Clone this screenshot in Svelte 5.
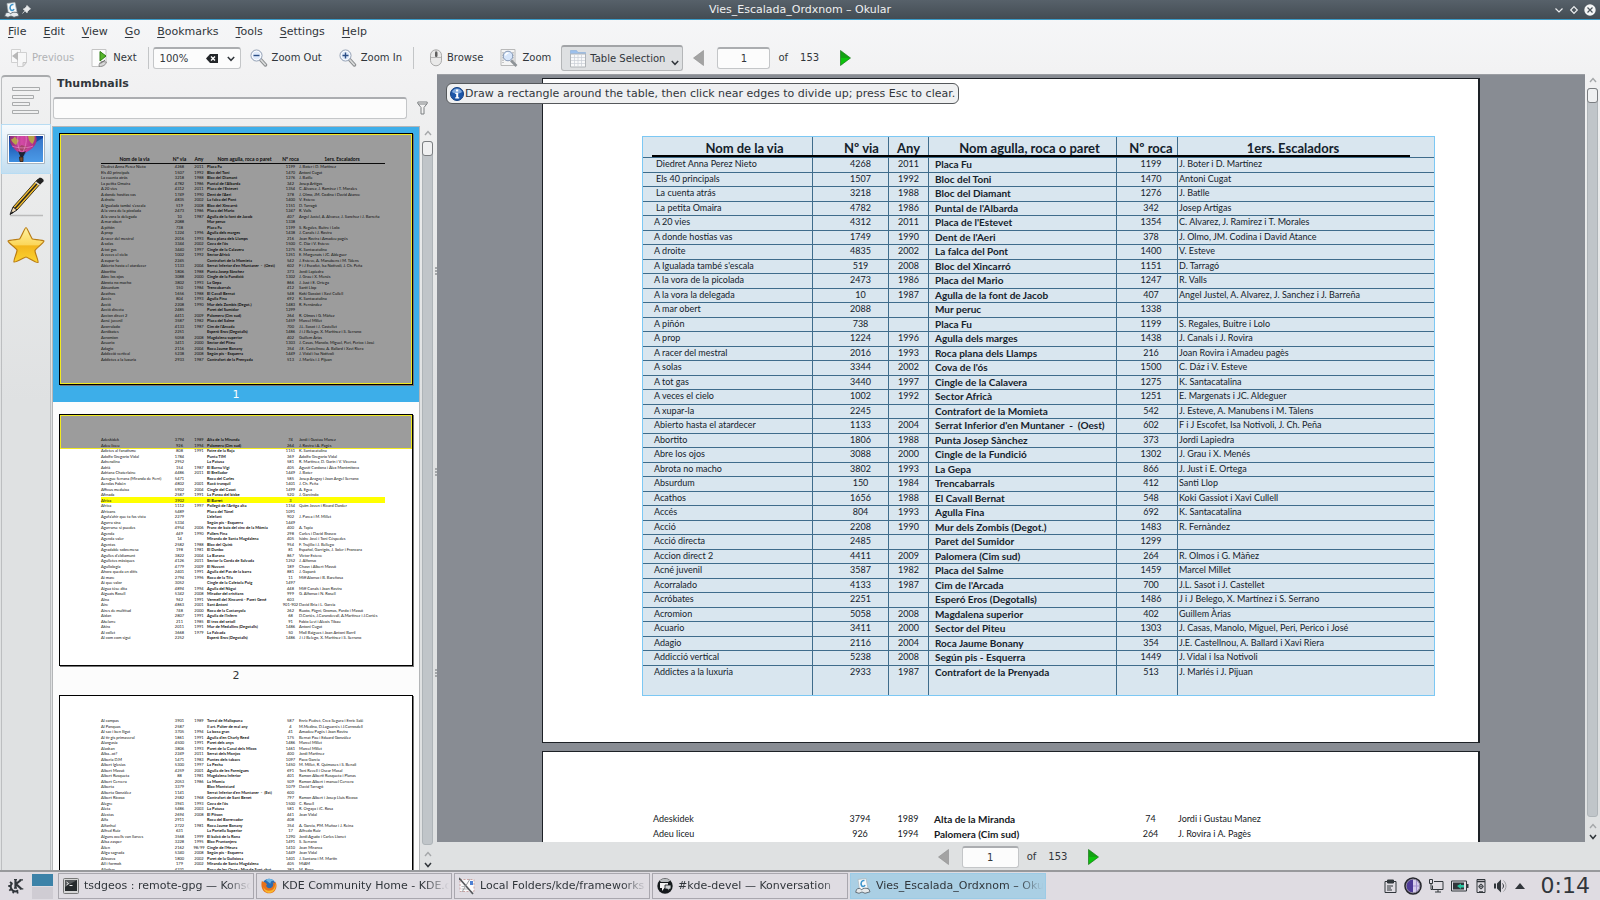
<script>
  const menus = ['File', 'Edit', 'View', 'Go', 'Bookmarks', 'Tools', 'Settings', 'Help'];

  const headers = ['Nom de la via', 'Nº via', 'Any', 'Nom agulla, roca o paret', 'Nº roca', '1ers. Escaladors'];

  // name | number | year | rock | rock number | climbers
  const parse = (text) =>
    text
      .trim()
      .split('\n')
      .map((line) => line.split('|').map((cell) => cell.trim()));

  const pageOne = parse(`
Diedret Anna Perez Nieto|4268|2011|Placa Fu|1199|J. Boter i D. Martínez
Els 40 principals|1507|1992|Bloc del Toni|1470|Antoni Cugat
La cuenta atrás|3218|1988|Bloc del Diamant|1276|J. Batlle
La petita Omaira|4782|1986|Puntal de l'Albarda|342|Josep Artigas
A 20 vies|4312|2011|Placa de l'Estevet|1354|C. Alvarez, J. Ramirez i T. Morales
A donde hostias vas|1749|1990|Dent de l'Aeri|378|J. Olmo, JM. Codina i David Atance
A droite|4835|2002|La falca del Pont|1400|V. Esteve
A Igualada també s'escala|519|2008|Bloc del Xincarró|1151|D. Tarragó
A la vora de la picolada|2473|1986|Placa del Mario|1247|R. Valls
A la vora la delegada|10|1987|Agulla de la font de Jacob|407|Angel Justel, A. Alvarez, J. Sanchez i J. Barreña
A mar obert|2088||Mur peruc|1338|
A piñón|738||Placa Fu|1199|S. Regales, Buitre i Lolo
A prop|1224|1996|Agulla dels marges|1438|J. Canals i J. Rovira
A racer del mestral|2016|1993|Roca plana dels Llamps|216|Joan Rovira i Amadeu pagès
A solas|3344|2002|Cova de l'ós|1500|C. Dáz i V. Esteve
A tot gas|3440|1997|Cingle de la Calavera|1275|K. Santacatalina
A veces el cielo|1002|1992|Sector Africà|1251|E. Margenats i JC. Aldeguer
A xupar-la|2245||Contrafort de la Momieta|542|J. Esteve, A. Manubens i M. Tàlens
Abierto hasta el atardecer|1133|2004|Serrat Inferior d'en Muntaner \u00a0- \u00a0(Oest)|602|F i J Escofet, Isa Notivoli, J. Ch. Peña
Abortito|1806|1988|Punta Josep Sànchez|373|Jordi Lapiedra
Abre los ojos|3088|2000|Cingle de la Fundició|1302|J. Grau i X. Menés
Abrota no macho|3802|1993|La Gepa|866|J. Just i E. Ortega
Absurdum|150|1984|Trencabarrals|412|Santi Llop
Acathos|1656|1988|El Cavall Bernat|548|Koki Gassiot i Xavi Cullell
Accés|804|1993|Agulla Fina|692|K. Santacatalina
Acció|2208|1990|Mur dels Zombis (Degot.)|1483|R. Fernàndez
Acció directa|2485||Paret del Sumidor|1299|
Accion direct 2|4411|2009|Palomera (Cim sud)|264|R. Olmos i G. Màñez
Acné juvenil|3587|1982|Placa del Salme|1459|Marcel Millet
Acorralado|4133|1987|Cim de l'Arcada|700|J.L. Sasot i J. Castellet
Acróbates|2251||Esperó Eros (Degotalls)|1486|J i J Belego, X. Martínez i S. Serrano
Acromion|5058|2008|Magdalena superior|402|Guillem Àrias
Acuario|3411|2000|Sector del Piteu|1303|J. Casas, Manolo, Miguel, Peri, Perico i José
Adagio|2116|2004|Roca Jaume Bonany|354|J.E. Castellnou, A. Ballard i Xavi Riera
Addicció vertical|5238|2008|Según pis - Esquerra|1449|J. Vidal i Isa Notivoli
Addictes a la luxuria|2933|1987|Contrafort de la Prenyada|513|J. Marlés i J. Pijuan`);

  const pageTwo = parse(`
Adeskidek|3794|1989|Alta de la Miranda|74|Jordi i Gustau Manez
Adeu liceu|926|1994|Palomera (Cim sud)|264|J. Rovira i A. Pagès
Adictes al fanatisme|808|1991|Fotre de la Roja|1151|K. Santacatalina
Adolfo Gregorio Vidal|1784||Punta TIM|369|Adolfo Gregorio Vidal
Adrenalina|2952||La Patusa|581|R. Martínez, D. Garin i V. Vicensa
Adrià|154|1987|El Barnu Vigi|405|Agustí Cardona i Àlex Montmitova
Adriana Chaterlaine|4486|2011|El Brellador|1449|J. Boter
Aeregue ferrana (Miranda de Ferri)|5471||Roca del Carles|585|Josep Aragay i Joan Angel Serrano
Aerolas Fabén|4802|2001|Racó tranquil|1401|J. Ch. Peña
Afficus meduixa|5902|2004|Cingle del Casot|1499|A. Egea
Afinada|2587|1991|La Panxa del bisbe|520|J. Garcindo
Africa|3902||El Barret|3|
Africa|1112|1997|Pollegó de l'Artiga alta|1154|Quim Joven i Ricard Darder
Africans|5489||Placa del Túnel|1091|
Agafa'ahir que ta fas vista|2279||L'elefant|902|J. Parea i M. Millet
Agarra sina|5334||Según pis - Esquerra|1449|
Agarrarse si puedes|4954|2006|Franc de baix del cinc de la Mòmia|400|A. Tapia
Agenda|449|1990|Pallers Fina|298|Carles i David Brasco
Agenda valer|14||Miranda de Santa Magdalena|405|Isidre Jové i Toni Céspedes
Agentas|2582|1988|Bloc del Quirò|954|F. Trujillo i J. Bellego
Agradable sobremesa|198|1981|El Dunbo|81|Español, Garrigós, J. Soler i Froncara
Agulles d'eldiamunt|3822|2004|La Barana|867|Víctor Esteve
Agulletes màsiques|4126|2011|Sector la Corda de Salvada|1252|J. Alfonso
Agullología|4779|2009|El Nuvant|189|Chasn i Albert Massó
Ahora queda en ditis|2401|1991|Agulla del Pas de la barra|881|J. Gaparó
Ai mare|2794|1996|Roca de la Tifa|11|Miff Alonso i B. Bareñosa
Ai que valor|3052||Cingle de la Cafetola Puig|1497|
Aigua tèse dita|4894|1994|Agulla del Nàgui|448|Miff Canals i Joan Rovira
Aiguats Rosell|5342|2008|Mirador del cristians|999|G. Alfonso i N. Rosell
Aïna|942|1991|Vermell del Xincarró - Paret Gené|603|
Aire|4863|2001|Sant Antoni|901-902|David Bria i L. Garcia
Aires de multitud|748|2000|Roca de la Castanyola|262|Ruoto, Pàgni, Gromas, Pardo i Massó
Aidan|2807|1991|Agulla de l'Infern|68|D.Cortès, J.Carandevall, A.Martinez i J.Cortès
Akelarre|211|1985|El tros del setoll|91|Fabio Levi i Alexis Tibau
Akira|2011|1991|Mur de Medallins (Degotalls)|1486|Antoni Cugat
Al collet|3668|1979|La Falcada|50|Moll Baigues i Joan Antoni Barril
Al com com sigui|2252||Esperó Eros (Degotalls)|1486|J i J Belego, X. Martínez i S. Serrano`);

  const pageThree = parse(`
Al campas|3901|1989|Torral de Mallopuna|587|Enric Pedret, Crex Segura i Enric Salé
Al Panquas|2587||Il art. Palter de mal any|4|M.Medina, D.Laguarrés i J.Carrosdell
Al sac i ben lligat|3705|1994|La bosa gran|41|Amadeu Pagès i Joan Rovira
Al tir gis primaveral|1861|1991|Agulla d'en Charly Reed|175|Bernat Pau i Eduard González
Alangasia|4500|1991|Paret dels anys|1486|Marcel Millet
Alaskan|3806|1993|Paret de la Canal dels Micos|1461|Marcel Millet
Alba…ot?|2249|2011|Serrat dels Monjos|400|Jordi Martinez
Alberia D.M|1471|1983|Puntes dels tabacs|1097|Paco Garcia
Albert Iglesias|5300|1997|La Pecha|1450|M. Millet, R. Quimases i S. Benali
Albert Massó|4259|2001|Agulla de les Formigues|691|Toni Revell i Oscar Masal
Albert Rusqueta|88|1981|Magdalena Inferior|401|Ramon Alberti Rusqueta i Planas
Albert Cervera|2053|1986|La Momia|509|Ramon Albert i manuel Cervera
Alberta|3379||Bloc Montstard|1079|David Tarragó
Alberta Gonzàlez|1141||Serrat Inferior d'en Muntaner \u00a0- \u00a0(Est)|600|
Albert Ricoso|2582|1968|Contrafort de Sant Benet|797|Ramon Albert i Josep Lluis Ricoso
Alegre|3941|1993|Cova de l'ós|1500|C. Rosell
Aleta|5486|2003|La Patusa|581|R. Orgaya i iC. Rosa
Alestas|2694|2008|El Pitson|441|Joan Vidal
Alfa|2911||Roca del Borrevador|408|
Alfanhuí|2722|1981|Roca Jaume Bonany|354|A. Garcia, PM. Muñoz i J. Reina
Alfred Ruiz|631||La Portella Superior|17|Alfredo Ruiz
Alguns ocells van llarves|3568|1999|El balcó de la Rona|1290|Jordi Agudo i Carles Llonet
Alisa zasper|3228|1995|Bloc Prantonjera|1491|S. Serrano
Àlien|2162|98/99|Cingle de l'Heura|1410|Joan Miranca
Aliga sagrada|5340|2008|Según pis - Esquerra|1449|Joan Vidal
Alissova|1800|2002|Paret de la Guilxiosa|1401|J. Santana i M. Martín
All i formok|179|2002|Miranda de Santa Magdalena|405|MiAM
Allathas|4221||Roca de les Onze - Mur de Sant abat|382|M. Ropa
Allicorn|2214|1998|Placa del Mario|1247|R. Valls`);

  const tasks = [
    { icon: 'konsole', title: 'tsdgeos : remote-gpg — Konsole' },
    { icon: 'firefox', title: 'KDE Community Home - KDE.org' },
    { icon: 'kmail', title: 'Local Folders/kde/frameworks' },
    { icon: 'konversation', title: '#kde-devel — Konversation' },
    { icon: 'okular', title: 'Vies_Escalada_Ordxnom – Okular', active: true },
  ];

  let page = $state(1);
  let zoom = $state('100%');
  let filter = $state('');
  const pages = 153;

  const prev = () => (page = Math.max(1, +page - 1));
  const next = () => (page = Math.min(pages, +page + 1));
</script>

{#snippet cols()}
  <colgroup>
    <col class="c-name" /><col class="c-num" /><col class="c-year" /><col class="c-rock" /><col class="c-roca" /><col />
  </colgroup>
{/snippet}

{#snippet routes(rows)}
  <tbody>
    {#each rows as row}
      <tr class:hit={row[1] === '3902'}>
        {#each row as cell}<td>{cell}</td>{/each}
      </tr>
    {/each}
  </tbody>
{/snippet}

{#snippet head()}
  <thead>
    <tr>{#each headers as h}<th>{h}</th>{/each}</tr>
  </thead>
{/snippet}

{#snippet magnifier(sign)}
  <svg width="18" height="18" viewBox="0 0 18 18">
    <path d="M10.5 10.5 15.5 16" stroke="#8c8f91" stroke-width="3.4" stroke-linecap="round" />
    <path d="M10.8 10.8 15.3 15.7" stroke="#dcdddd" stroke-width="1.6" stroke-linecap="round" />
    <circle cx="6.5" cy="6.5" r="5.5" fill="#dfeafb" stroke="#8b98ad" />
    <circle cx="6.5" cy="6.5" r="4.4" fill="none" stroke="#fff" />
    <path d={sign === '+' ? 'M3.5 6.5h6M6.5 3.5v6' : 'M3.5 6.5h6'} stroke="#2b4e86" stroke-width="1.4" />
  </svg>
{/snippet}

{#snippet pager()}
  <button class="arrow" aria-label="Previous page" onclick={prev}>
    <svg width="11" height="16" viewBox="0 0 11 16"><path d="M10.5.5v15L.5 8z" fill="#a3a3a3" stroke="#8d8d8d" stroke-width=".6" /></svg>
  </button>
  <input class="field page-no" aria-label="Page number" bind:value={page} />
  <span class="of">of</span>
  <span class="total">{pages}</span>
  <button class="arrow" aria-label="Next page" onclick={next}>
    <svg width="11" height="16" viewBox="0 0 11 16">
      <path d="M.5.5v15L10.5 8z" fill="#12a312" stroke="#1b7a1b" stroke-width=".7" />
      <path d="M1 8h9L1 14.5z" fill="#0cc40c" />
    </svg>
  </button>
{/snippet}

{#snippet scrollbar()}
  <div class="scrollbar">
    <svg width="8" height="6" viewBox="0 0 8 6"><path d="M1 5 4 1.500 7 5" fill="none" stroke="#a4a7a9" stroke-width="1.400" /></svg>
    <div class="track"><div class="handle"></div></div>
    <svg width="8" height="6" viewBox="0 0 8 6"><path d="M1 5 4 1.500 7 5" fill="none" stroke="#a4a7a9" stroke-width="1.400" /></svg>
    <svg width="8" height="6" viewBox="0 0 8 6"><path d="M1 1 4 4.500 7 1" fill="none" stroke="#31363b" stroke-width="1.500" /></svg>
  </div>
{/snippet}

{#snippet okularIcon()}
  <svg width="16" height="16" viewBox="0 0 16 16">
    <path d="M3 1.500 11 .5l2 10-8.500 1.500z" fill="#f8fafb" stroke="#aab4ba" stroke-width=".7" />
    <path d="M9.500 2.500C6.500 2 5.500 5 6.500 7.500c1 1.600 3 1 3.500-.5" fill="none" stroke="#3d95cc" stroke-width="1.500" />
    <path d="M1.500 11.500c1.500-1.500 4-1.500 5 .3 1.500-1.800 5-2.300 7.500-.6l1 2.600-5 1.500-3-1.300-3 1.300-3.300-1z" fill="#e6e9eb" stroke="#5c676e" stroke-width=".9" />
  </svg>
{/snippet}

<div class="desktop">
  <header class="titlebar">
    <span class="title-left">
      {@render okularIcon()}
      <svg width="9" height="9" viewBox="0 0 9 9"><path d="M5 .5 8.500 4 7.300 4.500 5.500 6.500 5 7.800 1.300 4 2.700 3.500 4.500 1.800zM3 5.700.5 8.500" fill="#e8eaeb" stroke="#e8eaeb" stroke-width=".8" /></svg>
    </span>
    <h1>Vies_Escalada_Ordxnom – Okular</h1>
    <span class="title-right">
      <button aria-label="Minimize"><svg width="10" height="10" viewBox="0 0 10 10"><path d="M1.500 3.500 5 7l3.500-3.500" fill="none" stroke="#eceeef" stroke-width="1.200" /></svg></button>
      <button aria-label="Maximize"><svg width="10" height="10" viewBox="0 0 10 10"><path d="M5 1.700 8.300 5 5 8.300 1.700 5z" fill="none" stroke="#eceeef" stroke-width="1.200" /></svg></button>
      <button aria-label="Close"><svg width="12" height="12" viewBox="0 0 12 12"><circle cx="6" cy="6" r="5.700" fill="#f4f5f5" /><path d="m3.500 3.500 5 5m0-5-5 5" stroke="#4b545b" stroke-width="1.200" /></svg></button>
    </span>
  </header>

  <nav class="menubar">
    {#each menus as m}
      <button><u>{m[0]}</u>{m.slice(1)}</button>
    {/each}
  </nav>

  <div class="toolbar">
    <button class="tool previous" disabled>
      <svg width="18" height="18" viewBox="0 0 18 18" opacity=".55">
        <path d="M1.500.5h9v13h-9z" fill="#fff" stroke="#b5b5b5" />
        <path d="M7.500 3.500h9v10l-3.500 4H7.500z" fill="#fbfbfb" stroke="#b5b5b5" />
        <path d="m16.500 13.500-3.500 4v-4z" fill="#ddd" stroke="#a5a5a5" />
        <path d="M8 2.500v9L2 7z" fill="#888" />
      </svg>
      Previous
    </button>
    <button class="tool" onclick={next}>
      <svg width="18" height="18" viewBox="0 0 18 18">
        <path d="M1 .5h14v12l-4 5H1z" fill="#fdfdfd" stroke="#c4c4c4" />
        <path d="M8 17.500c0-3 1-4.500 3-5l4.500.5c-1 3-3 4.500-7.500 4.500z" fill="#d8d8d8" stroke="#8e8e8e" />
        <path d="M9.500 14.500 14 11" stroke="#666" />
        <path d="M9 2.500v9.500L15 7z" fill="#56b62b" stroke="#2e7d14" />
      </svg>
      Next
    </button>
    <i class="sep"></i>
    <span class="field combo">
      <input aria-label="Zoom level" bind:value={zoom} />
      <button aria-label="Clear" onclick={() => (zoom = '')}>
        <svg width="12" height="9" viewBox="0 0 12 9"><path d="M4 0h8v9H4L0 4.500z" fill="#232629" /><path d="m5 2.500 4 4m0-4-4 4" stroke="#fff" stroke-width="1.400" /></svg>
      </button>
      <button aria-label="Zoom levels">
        <svg width="8" height="6" viewBox="0 0 8 6"><path d="M.8 1 4 4.300 7.200 1" fill="none" stroke="#31363b" stroke-width="1.500" /></svg>
      </button>
    </span>
    <button class="tool out">{@render magnifier('-')} Zoom Out</button>
    <button class="tool">{@render magnifier('+')} Zoom In</button>
    <i class="sep"></i>
    <button class="tool">
      <svg width="14" height="18" viewBox="0 0 14 18">
        <rect x="1.500" y=".8" width="11" height="16" rx="5.500" fill="#e9e9e9" stroke="#a9a9a9" />
        <path d="M7 1v7M2 8.500h10" stroke="#b5b5b5" />
        <rect x="6" y="2.500" width="2.500" height="5.500" rx="1.200" fill="#5d5d5d" />
      </svg>
      Browse
    </button>
    <button class="tool">
      <svg width="18" height="18" viewBox="0 0 18 18">
        <path d="M1 .5h14v16H1z" fill="#f5f5f5" stroke="#b9b9b9" />
        <path d="M3 3v11M13 3v11" stroke="#999" stroke-dasharray="1.500 1" />
        <path d="m11 11.500 5.500 5.500" stroke="#8e9397" stroke-width="2.600" />
        <circle cx="8" cy="7" r="4.800" fill="#d7e6fb" stroke="#8497b5" />
        <path d="M5.500 6.500a3 3 0 0 1 3-2.500" fill="none" stroke="#fff" stroke-width="1.500" />
      </svg>
      Zoom
    </button>
    <button class="tool checked">
      <svg width="16" height="18" viewBox="0 0 16 18">
        <path d="M.5.500h6l1.500 2h7.500V7H.5z" fill="#9cc0ec" stroke="#8baed8" stroke-width=".6" />
        <path d="M.5 4h15v13H.5z" fill="#f8f9fa" stroke="#b0b4b8" />
        <path d="M1 7.500h14M1 10.500h14M1 13.500h14M4.500 5v11.500M8 5v11.500M11.500 5v11.500" stroke="#c8ced5" stroke-width=".7" />
      </svg>
      Table Selection
      <svg class="drop" width="8" height="6" viewBox="0 0 8 6"><path d="M.8 1 4 4.300 7.200 1" fill="none" stroke="#31363b" stroke-width="1.500" /></svg>
    </button>
    {@render pager()}
  </div>

  <main>
    <nav class="tabs">
      <button aria-label="Contents">
        <svg width="30" height="28" viewBox="0 0 30 28" fill="#f6f6f6" stroke="#a9abac"><path d="M1.500.5h27v3h-27zM1.500 8.500h21v3h-21zM1.500 15.500h17v3h-17zM1.500 23.500h26v3h-26z" /></svg>
      </button>
      <button class="current" aria-label="Thumbnails">
        <svg width="38" height="30" viewBox="0 0 38 30">
          <defs>
            <linearGradient id="sky" x2="0" y2="1"><stop stop-color="#0e3f9e" /><stop offset="1" stop-color="#3d8ee0" /></linearGradient>
            <linearGradient id="silk" x2="1"><stop stop-color="#8a2a78" /><stop offset=".45" stop-color="#d44aa6" /><stop offset="1" stop-color="#a32c7d" /></linearGradient>
          </defs>
          <path d="M.5.5h37v29H.5z" fill="#fff" stroke="#a8b4bf" />
          <path d="M2 2h34v26H2z" fill="url(#sky)" />
          <path d="M20 17C25 12 28 8 36 4v24H14z" fill="#5aa5ee" opacity=".5" />
          <path d="M3 2h26c1.500 4 .5 8-3 11.500-3 3-6 4.500-9 6h-3.500c-3-1.500-5.500-3.500-7.500-6C3 10 2 6 3 2z" fill="url(#silk)" />
          <path d="M4 5.500c2-.5 3-2 4-3 1 2 2.500 3.500 4 4L9 11C7 10 5 8 4 5.500zM21 2h6.500c.5 3-.2 5.500-2 8-2.500-1.500-4-4-4.500-8z" fill="#b6a24b" />
          <path d="M10 14.500c2-1 3.500-2.500 4.500-3.500 2 .5 4 1.500 7 2-2 2-3.500 3-5.500 4-2.500 0-4.500-1-6-2.500z" fill="#a4456a" />
          <path d="M11 2c-1 6 0 12 3 17M19 2c1 6-1 12-3.500 17M5 12c6 2.500 15 2.500 21 0" fill="none" stroke="#f08fd0" stroke-width=".6" />
          <path d="m11 17 2.500 6h2.500l3-6c-2 1.500-6 1.500-8 0z" fill="#1f2434" />
          <path d="M12.500 23h3.500v4.500h-3z" fill="#7a4a23" stroke="#2f1c14" stroke-width=".8" />
        </svg>
      </button>
      <button aria-label="Reviews">
        <svg width="38" height="42" viewBox="0 0 38 42">
          <path d="M3 39.500h33" stroke="#bbb" stroke-width="1.500" />
          <path d="M30.500 3.500 34.500 6.500 10 34 6 31z" fill="#f2bd2c" stroke="#393120" />
          <path d="M32.500 5 8 32.500" stroke="#222" stroke-width="1.500" />
          <path d="M6 31 10 34 3 38.500z" fill="#ecd6b1" stroke="#222" /><path d="m3 38.500 2-3 1.500 1.200z" fill="#111" />
          <path d="M29 5.500 33 8.500 36.500 5.500c1-2-2.500-4.500-4.500-3.500z" fill="#222" /><path d="m28.500 6 4 3" stroke="#ddd" stroke-width="1.500" />
        </svg>
      </button>
      <button aria-label="Bookmarks">
        <svg width="38" height="38" viewBox="0 0 38 38">
          <defs><linearGradient id="gold" x2="0" y2="1"><stop stop-color="#fff3a1" /><stop offset=".5" stop-color="#fbd65a" /><stop offset=".52" stop-color="#f3b61c" /><stop offset="1" stop-color="#fcd432" /></linearGradient></defs>
          <path d="M19 1.500c1 0 5.500 11 6.500 11.500s11 1 11.500 2-8.500 8-9 9.500 4 11 3 12S20 31 19 31 8 37 7 36s3.500-10.500 3-12S.500 16 1 15s10.500-1.500 11.500-2S18 1.500 19 1.500z" fill="url(#gold)" stroke="#b97c14" stroke-width="1.200" stroke-linejoin="round" />
        </svg>
      </button>
    </nav>

    <aside>
      <h2>Thumbnails</h2>
      <div class="search">
        <input class="field" aria-label="Search thumbnails" bind:value={filter} />
        <svg width="11" height="14" viewBox="0 0 11 14"><path d="M.8 1h9.400v1.500L7 6.500v6.500H4V6.500L.8 2.500z" fill="#f2f2f2" stroke="#7d8082" /><path d="M1 3h9" stroke="#7d8082" /></svg>
      </div>
      <div class="thumbs">
        <ol>
          <li class="selected">
            <div class="thumb first">
              <table>{@render cols()}{@render head()}{@render routes(pageOne)}</table>
              <div class="view full"></div>
            </div>
            <span>1</span>
          </li>
          <li>
            <div class="thumb">
              <table>{@render cols()}{@render routes(pageTwo)}</table>
              <div class="view"></div>
            </div>
            <span>2</span>
          </li>
          <li>
            <div class="thumb">
              <table>{@render cols()}{@render routes(pageThree)}</table>
            </div>
            <span>3</span>
          </li>
        </ol>
        {@render scrollbar()}
      </div>
    </aside>

    <div class="splitter"><i></i><i></i><i></i></div>

    <section class="viewer">
      <div class="canvas">
        <div class="pages">
          <article class="page">
            <div class="selection">
              <table class="sheet ruled">{@render cols()}{@render head()}{@render routes(pageOne)}</table>
              <div class="rule"></div>
            </div>
          </article>
          <article class="page second">
            <table class="sheet">{@render cols()}{@render routes(pageTwo)}</table>
          </article>
        </div>
        {@render scrollbar()}
        <div class="message">
          <svg width="14" height="14" viewBox="0 0 14 14">
            <circle cx="7" cy="7" r="6.500" fill="#1c56a8" stroke="#123f80" /><path d="M2 5a5.300 5.300 0 0 1 10 0c-3 2-7 2-10 0z" fill="#7fa9de" />
            <path d="M6 2.500h2.200v2H6zM5.300 5.700h2.900v4.600h1v1.200h-4v-1.200h1V7h-.9z" fill="#fff" />
          </svg>
          Draw a rectangle around the table, then click near edges to divide up; press Esc to clear.
        </div>
      </div>
      <div class="minibar">{@render pager()}</div>
    </section>
  </main>

  <footer>
    <button class="kicker" aria-label="Application menu">
      <svg width="16" height="16" viewBox="0 0 16 16">
        <path d="M7.500 1.500v8.500M13 2 8 6l5.500 5" fill="none" stroke="#31363b" stroke-width="2.200" />
        <path d="M6 1.500h3M6 10.200h3M11.500 1.800H15M11.800 10.800h3.500" stroke="#31363b" stroke-width="1.200" />
        <path d="M4.500 5.200A4 4 0 0 0 3.500 11a4 4 0 0 0 6.500 1.200" fill="none" stroke="#31363b" stroke-width="2" />
        <path d="M2.500 8H.3M3.200 11 1.300 12.700M5.800 13l-.8 2.300M9 13l.8 2.500M3.800 5.500 2 4" stroke="#31363b" stroke-width="1.800" />
      </svg>
    </button>
    <div class="desks"><button class="on" aria-label="Desktop 1"></button><button aria-label="Desktop 2"></button></div>
    <div class="tasks">
      {#each tasks as task}
        <button class="task" class:active={task.active}>
          {#if task.icon === 'konsole'}
            <svg width="16" height="16" viewBox="0 0 16 16"><rect x=".5" y=".5" width="15" height="15" rx="1" fill="#d5d5d5" stroke="#777" /><path d="M2 2h12v11H2z" fill="#262a2c" /><path d="M2 2h12L2 9z" fill="#56595b" /><path d="m3.500 4 2 1.500-2 1.500M6.500 7.500h3" fill="none" stroke="#eee" /></svg>
          {:else if task.icon === 'firefox'}
            <svg width="16" height="16" viewBox="0 0 17 17"><circle cx="8.500" cy="8" r="7.300" fill="#2b6cb3" /><path d="M5 2c3-2 7-1 9 1-3-.5-4 1-4 3z" fill="#6db5e4" /><path d="M1 3c.5 1 1.500 1.500 3 1.500 1 .3 1 1.500 2.500 2L5.500 8C5.500 10.500 9 12 12 9.500c1-1 1.500-3 .5-5C15 6 15.500 5 15 3.500c2 3 2 7-.3 10-3.200 4-9.700 3.500-12.400-.2C.3 10.500 0 6 1 3z" fill="#e8711c" /><path d="M15 5c.5 5-2 8.500-6.500 8.500-2.500 0-5-1.500-6-4C3 14 6.500 16 9 15.800 13.500 15.500 17 11 15 5z" fill="#f8b92e" /></svg>
          {:else if task.icon === 'kmail'}
            <svg width="16" height="18" viewBox="1 0 16 18"><path d="M2 2.500h14v12H2z" fill="#fbfbfb" stroke="#c9a3a3" stroke-dasharray="2 1.500" /><path d="M12 4h3v4h-3z" fill="#4c80d3" /><path d="M3.500 9.500h5M3.500 12h7" stroke="#b3b7ba" /><path d="M1 1 15 17" stroke="#54585b" stroke-width="1.600" /><path d="M4 15 12 2" stroke="#9c9fa1" /></svg>
          {:else if task.icon === 'konversation'}
            <svg width="16" height="16" viewBox="1 0 16 16"><circle cx="9" cy="8" r="7.700" fill="#15191c" /><path d="M3.500 2.500c3-2.500 8-2.500 11 0L12 4H5z" fill="#b9bcbe" /><path d="M4 5h8v5H8.500L6 13v-3H4z" fill="#f3f3f3" /><path d="M9 7h6v4h-1.500v2l-2-2H9z" fill="#cfd2d4" stroke="#15191c" stroke-width=".8" /></svg>
          {:else}
            {@render okularIcon()}
          {/if}
          <span>{task.title}</span>
        </button>
      {/each}
    </div>
    <div class="tray">
      <svg width="13" height="14" viewBox="0 0 13 14" fill="none" stroke="#31363b"><path d="M1 2.500h11v11H1z" /><path d="M3.500 1h6v3h-6z" fill="#31363b" /><path d="M3 7h6M3 9h4M3 11h5" /></svg>
      <svg width="18" height="18" viewBox="0 0 18 18"><circle cx="9" cy="9" r="8" fill="#4f3b98" stroke="#26272b" stroke-width="1.600" /><path d="M9 2a7 7 0 0 1 0 14z" fill="#d7cdec" /><path d="M9 9h7M12.500 3v12" stroke="#a693d1" /><circle cx="9" cy="9" r="6.800" fill="none" stroke="#938d9e" /></svg>
      <svg width="15" height="14" viewBox="0 0 15 14" fill="none" stroke="#31363b"><path d="M5 2.500h9v8H3.500v-4" /><path d="M.5.500h3v4h-3zM2 4.500v6h1.500M6 13h6M9 10.500V13" /></svg>
      <svg width="18" height="12" viewBox="0 0 18 12"><path d="M.5 1h15v10H.5z" fill="none" stroke="#31363b" /><path d="M2 2.500h11v7H2z" fill="#31363b" /><path d="M16 4h1.500v4H16z" fill="#31363b" /><path d="m6 6 4-2.500V5h3v2.500h-3V9z" fill="#2bc3a0" /></svg>
      <svg width="10" height="14" viewBox="0 0 10 14" fill="none" stroke="#31363b"><path d="M1 .5h8v13H1z" /><path d="M1 2.500h8M3 13h4" stroke-width="1.500" /><circle cx="5" cy="7.500" r="2" /><path d="M5 4.500v6M2.500 7.500h5" stroke-width=".6" /></svg>
      <svg width="15" height="14" viewBox="0 0 15 14"><path d="M1 4.500h2v5H1zM4 4.500 8 .5v13L4 9.500z" fill="#31363b" /><path d="M9.500 4.500c1.300 1.500 1.300 3.500 0 5" fill="none" stroke="#31363b" /><path d="M10.500 1.500c3.300 3 3.300 8 0 11" fill="none" stroke="#9b9ca0" /></svg>
      <svg width="10" height="6" viewBox="0 0 10 6"><path d="M0 6 5 0l5 6z" fill="#31363b" /></svg>
    </div>
    <time>0:14</time>
  </footer>
</div>

<style>
  :global(body) {
    margin: 0;
  }
  .desktop {
    height: 100vh;
    display: flex;
    flex-direction: column;
    overflow: hidden;
    font: 11px/14px 'DejaVu Sans', sans-serif;
    color: #31363b;
    background: linear-gradient(#f7f8fa, #f2f2f3 70px, #eceded 160px, #dfe1e2 400px);
  }
  svg {
    display: block;
    flex: none;
    fill: none;
  }
  button {
    margin: 0;
    padding: 0;
    border: 0;
    background: none;
    font: inherit;
    color: inherit;
  }
  input {
    min-width: 0;
    font: inherit;
    color: inherit;
    outline: none;
  }

  .titlebar {
    display: grid;
    grid-template-columns: 1fr auto 1fr;
    align-items: center;
    height: 19px;
    padding: 0 4px;
    color: #eff0f1;
    background: linear-gradient(#57616a, #434c53);
    border-bottom: 1px solid #3c9cc8;
  }
  .titlebar h1 {
    margin: 0;
    font-size: 11px;
    font-weight: 400;
  }
  .title-left {
    display: flex;
    align-items: center;
    gap: 2px;
  }
  .title-right {
    display: flex;
    justify-content: flex-end;
    align-items: center;
    gap: 5px;
  }

  .menubar {
    display: flex;
    gap: 17px;
    padding: 4px 8px 4px;
    height: 15px;
    line-height: 15px;
  }
  .menubar u {
    text-underline-offset: 2px;
  }

  .toolbar {
    display: flex;
    align-items: center;
    height: 26px;
    padding: 2px 10px 3px;
    font-size: 10px;
  }
  .tool {
    display: flex;
    align-items: center;
    gap: 4px;
    margin-right: 17px;
    white-space: nowrap;
  }
  .tool:disabled {
    color: #b0b2b4;
  }
  .tool.out {
    margin-left: 9px;
  }
  .sep {
    width: 1px;
    height: 22px;
    margin-right: 4px;
    margin-left: -6px;
    background: #c3c5c7;
  }
  .sep + .tool {
    margin-left: 11px;
  }
  .field {
    box-sizing: border-box;
    height: 22px;
    background: #fcfcfc;
    border: 1px solid #c4c6c8;
    border-top: 2px solid #abadb0;
    border-radius: 3px;
  }
  .combo {
    display: flex;
    align-items: center;
    gap: 9px;
    width: 88px;
    padding: 0 5px 0 6px;
  }
  .combo input {
    flex: 1;
    padding: 0;
    border: 0;
    background: none;
  }
  .tool.checked {
    box-sizing: border-box;
    height: 26px;
    margin: 0 10px 0 -7px;
    padding: 0 3px 0 8px;
    background: #dee0e2;
    border: 1px solid #b4b6b8;
    border-top: 2px solid #a2a4a7;
    border-radius: 3px;
  }
  .drop {
    align-self: flex-end;
    margin: 0 0 4px 2px;
  }
  .page-no {
    width: 53px;
    margin: 0 8px 0 13px;
    text-align: center;
  }
  .of {
    margin-right: 12px;
  }
  .total {
    margin-right: 21px;
  }

  main {
    flex: 1;
    min-height: 0;
    display: flex;
  }
  .tabs {
    box-sizing: border-box;
    width: 50px;
    margin: 1px 0 0 1px;
    border: 1px solid #bcbec0;
    border-top: 2px solid #a9abad;
    border-bottom: 0;
    border-radius: 4px 4px 0 0;
    display: flex;
    flex-direction: column;
  }
  .tabs button {
    display: flex;
    justify-content: center;
    align-items: center;
    height: 48px;
  }
  .tabs .current {
    background: linear-gradient(#f6fafd, #c3def0);
    box-shadow: 0 0 0 1px #b7dcf3;
  }

  aside {
    display: flex;
    flex-direction: column;
    width: 381px;
    padding-left: 2px;
  }
  aside h2 {
    margin: 3px 0 6px 4px;
    font-size: 11px;
    line-height: 14px;
  }
  .search {
    display: flex;
    align-items: center;
    gap: 10px;
    margin-bottom: 8px;
  }
  .search .field {
    flex: 1;
  }
  .search svg {
    margin-right: 6px;
  }
  .thumbs {
    flex: 1;
    min-height: 0;
    display: flex;
    gap: 2px;
  }
  ol {
    flex: 1;
    margin: 0;
    padding: 0;
    list-style: none;
    overflow: hidden;
    background: #fcfcfc;
    box-shadow: 0 0 0 1px #b4b6b8;
  }
  li {
    height: 275px;
    padding: 0 6px;
    margin-bottom: 6px;
    text-align: center;
  }
  li.selected {
    color: #fcfcfc;
    background: #3daee9;
  }
  li::before {
    content: '';
    display: block;
    height: 6px;
  }
  li > span {
    display: block;
    margin-top: 2px;
    line-height: 16px;
  }
  .thumb {
    position: relative;
    box-sizing: border-box;
    height: 252px;
    padding: 22px 27px 0 41px;
    overflow: hidden;
    background: #fff;
    border: 1px solid #000;
    box-shadow: 1px 1px 0 #777;
    color: #111;
    text-align: left;
  }
  .view {
    position: absolute;
    inset: 0 0 auto;
    box-sizing: border-box;
    height: 34px;
    background: rgba(0, 0, 0, 0.39);
    border: 1px solid #f2ea20;
  }
  .view.full {
    height: 100%;
  }

  table {
    width: 100%;
    table-layout: fixed;
    border-spacing: 0;
    font-family: Lato, Carlito, sans-serif;
    white-space: nowrap;
  }
  td,
  th {
    padding: 0;
    text-align: left;
  }
  td:nth-child(2),
  td:nth-child(3),
  td:nth-child(5) {
    text-align: center;
  }
  td:nth-child(4) {
    font-weight: 700;
  }
  .thumb table {
    font-size: 4px;
    line-height: 5px;
  }
  .thumb td {
    height: 5px;
  }
  .thumb tr:nth-child(even) td {
    height: 6px;
  }
  .thumb th {
    height: 7px;
    font-size: 5px;
    line-height: 5px;
    text-align: center;
    border-bottom: 1px solid #111;
  }
  .thumb .c-name {
    width: 67px;
  }
  .thumb .c-num {
    width: 23px;
  }
  .thumb .c-year {
    width: 16px;
  }
  .thumb .c-rock {
    width: 75px;
  }
  .thumb .c-roca {
    width: 17px;
  }
  .hit {
    background: #ff0;
  }

  .scrollbar {
    display: flex;
    flex-direction: column;
    align-items: center;
    gap: 5px;
    width: 11px;
    padding: 3px 1px 2px;
  }
  .track {
    flex: 1;
    box-sizing: border-box;
    width: 11px;
    margin-bottom: 1px;
    background: #c0c5c9;
    border: 1px solid #aeb4b8;
    border-radius: 3px;
  }
  .handle {
    box-sizing: border-box;
    height: 15px;
    margin: -1px;
    background: #eff0f1;
    border: 1px solid #7b7e81;
    border-radius: 3px;
  }

  .splitter {
    display: flex;
    flex-direction: column;
    justify-content: space-evenly;
    align-items: center;
    width: 3px;
  }
  .splitter i {
    width: 2px;
    height: 8px;
    background: repeating-linear-gradient(#a4a7a9 0 2px, transparent 2px 3px);
  }

  .viewer {
    flex: 1;
    min-width: 0;
    display: flex;
    flex-direction: column;
  }
  .canvas {
    position: relative;
    flex: 1;
    min-height: 0;
    display: flex;
    gap: 1px;
    padding-right: 1px;
  }
  .pages {
    flex: 1;
    min-width: 0;
    overflow: hidden;
    padding-top: 3px;
    background: #888c93;
    border-top: 1px solid #9b9ea3;
    box-sizing: border-box;
  }
  .page {
    box-sizing: border-box;
    max-width: 938px;
    height: 665px;
    margin: 0 auto 8px;
    padding: 57px 43px 0 99px;
    background: #fff;
    border: 1px solid #1d2126;
    border-right-width: 2px;
  }
  .page.second {
    padding-top: 61px;
  }
  .selection {
    position: relative;
  }
  .rule {
    position: absolute;
    left: 10px;
    right: 25px;
    top: 19px;
    height: 2px;
    background: #000;
  }
  .sheet {
    font-size: 9px;
    line-height: 12px;
    color: #15191d;
  }
  .sheet td {
    box-sizing: border-box;
    height: 14px;
    vertical-align: top;
  }
  .sheet tr:nth-child(odd) td {
    height: 15px;
  }
  .sheet td:first-child {
    padding-left: 11px;
  }
  .ruled tbody tr:nth-child(-n + 4) td:first-child {
    padding-left: 13px;
  }
  .sheet td:nth-child(2) {
    padding-left: 20px;
  }
  .sheet td:nth-child(4) {
    padding-left: 6px;
    font-size: 10px;
  }
  .sheet td:nth-child(5) {
    padding-left: 8px;
  }
  .sheet td:nth-child(6) {
    padding-left: 1px;
  }
  .ruled {
    background: #d9e6ef;
    border: 1px solid #7cc8f4;
    color: #14212b;
  }
  .ruled th {
    box-sizing: border-box;
    height: 21px;
    padding-top: 2px;
    font-size: 13px;
    line-height: 17px;
    text-align: center;
  }
  .ruled th:first-child {
    padding-left: 34px;
  }
  .ruled th:nth-child(2) {
    padding-left: 22px;
  }
  .ruled th:nth-child(4) {
    padding-left: 14px;
  }
  .ruled th:nth-child(5) {
    padding-left: 8px;
  }
  .ruled th:last-child {
    padding-right: 26px;
  }
  .ruled td,
  .ruled th {
    border: solid #3f6c8b;
    border-width: 0 1px 1px 0;
  }
  .ruled td:last-child,
  .ruled th:last-child {
    border-right: 0;
  }
  .ruled tbody tr:last-child td {
    height: 29px;
    border-bottom: 0;
  }
  .sheet .c-name {
    width: 170px;
  }
  .sheet .c-num {
    width: 76px;
  }
  .sheet .c-year {
    width: 40px;
  }
  .sheet .c-rock {
    width: 188px;
  }
  .sheet .c-roca {
    width: 61px;
  }

  .message {
    position: absolute;
    left: 9px;
    top: 9px;
    box-sizing: border-box;
    height: 21px;
    display: flex;
    align-items: center;
    gap: 1px;
    padding: 0 3px;
    background: #eff0f1;
    border: 1px solid #55585b;
    border-radius: 6px;
    white-space: nowrap;
  }
  .minibar {
    display: flex;
    align-items: center;
    justify-content: center;
    height: 27px;
    padding-top: 1px;
    font-size: 10px;
  }
  .minibar .page-no {
    width: 57px;
  }

  footer {
    display: flex;
    align-items: center;
    height: 28px;
    background: #dfdce2;
    border-top: 2px solid #98999c;
    padding: 0 10px 0 6px;
  }
  .desks {
    display: flex;
    flex-direction: column;
    gap: 1px;
    margin: 0 5px 0 6px;
  }
  .desks button {
    width: 21px;
    height: 12px;
    background: #cfccd3;
  }
  .desks .on {
    background: #3c82a8;
  }
  .tasks {
    flex: 1;
    display: flex;
    gap: 2px;
  }
  .task {
    box-sizing: border-box;
    display: flex;
    align-items: center;
    gap: 5px;
    width: 196px;
    height: 26px;
    padding: 0 2px 0 4px;
    border: 1px solid #a9a7ae;
    text-align: left;
  }
  .task span {
    flex: 1;
    overflow: hidden;
    white-space: nowrap;
    -webkit-mask-image: linear-gradient(90deg, #000 85%, transparent);
    mask-image: linear-gradient(90deg, #000 85%, transparent);
  }
  .task.active {
    background: #aacfe4;
    border-color: #9ccbe6;
  }
  .kicker {
    padding: 0 2px;
  }
  .tray {
    display: flex;
    align-items: center;
    gap: 7px;
    margin-right: 16px;
  }
  time {
    font-size: 22px;
    line-height: 26px;
  }
</style>
